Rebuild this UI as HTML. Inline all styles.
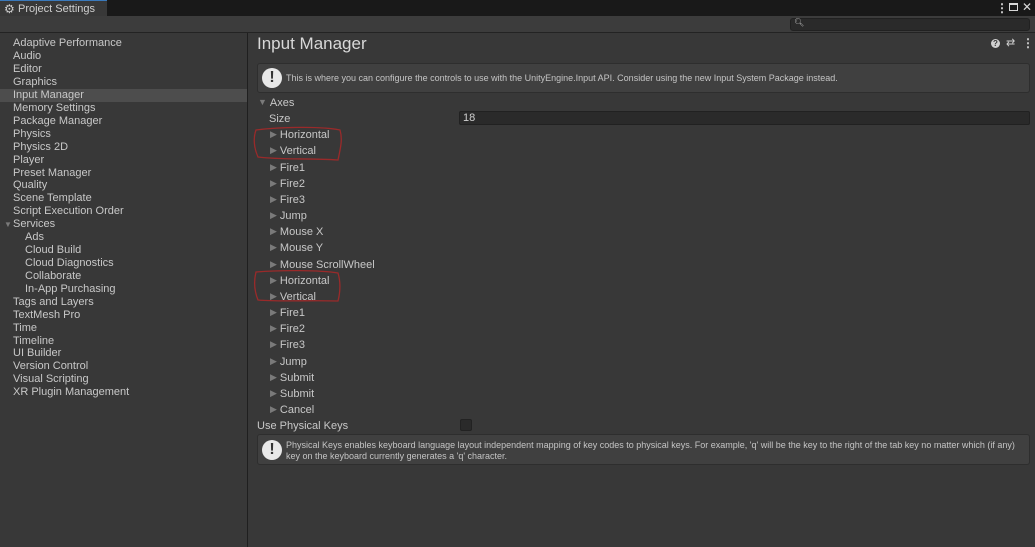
<!DOCTYPE html>
<html><head><meta charset="utf-8">
<style>
*{margin:0;padding:0;box-sizing:border-box}
body{width:1035px;height:547px;background:#383838;font-family:"Liberation Sans",sans-serif;color:#c8c8c8;font-size:11px;position:relative;overflow:hidden}
.abs{position:absolute;white-space:nowrap}
#top{left:0;top:0;width:1035px;height:16px;background:#191919}
#tab{left:0;top:0;width:107px;height:17px;background:#383838;border-top:1px solid #3a79bb}
#tb{left:0;top:16px;width:1035px;height:17px;background:#3c3c3c;border-bottom:1px solid #232323}
#search{left:790px;top:18px;width:240px;height:13px;background:#2a2a2a;border:1px solid #212121;border-radius:3px}
#sep{left:247px;top:33px;width:1px;height:514px;background:#1f1f1f}
.li{position:absolute;left:13px;height:13px;line-height:13px;font-size:11px;color:#c8c8c8}
#sel{left:0;top:88px;width:247px;height:13px;background:#4d4d4d}
.r{position:absolute;height:16px;line-height:16px;font-size:11px;color:#c8c8c8;white-space:nowrap}
.tri{color:#7a7a7a;font-size:9px;margin-right:3px;position:relative;top:-1px}
.help{position:absolute;left:257px;background:#404040;border:1px solid #2e2e2e;border-radius:3px}
.bang{position:absolute;left:4px;width:20px;height:20px;border-radius:50%;background:#e8e8e8;color:#333;font-weight:bold;font-size:16px;text-align:center;line-height:20px}
.ht{position:absolute;left:28px;font-size:9px;color:#c4c4c4;line-height:11px}
#L{position:absolute;left:0;top:1px;width:247px;height:400px}
#R{position:absolute;left:0;top:1px;width:1035px;height:420px}
</style></head><body>
<div id="top" class="abs"></div>
<div id="tab" class="abs"><span style="position:absolute;left:4px;top:1px;font-size:12px;color:#d0d0d0">⚙</span><span style="position:absolute;left:18px;top:2px;font-size:11px;color:#d0d0d0">Project Settings</span></div>
<div class="abs" style="left:996px;top:1px;color:#d8d8d8;font-size:12px;font-weight:bold">⋮</div>
<div class="abs" style="left:1009px;top:3px;width:9px;height:8px;border:1px solid #d8d8d8;border-top-width:2px"></div>
<div class="abs" style="left:1022px;top:0px;color:#d8d8d8;font-size:12px">✕</div>
<div id="tb" class="abs"></div>
<div id="search" class="abs"><span style="position:absolute;left:3px;top:-1px;font-size:8px;color:#bbb">🔍︎</span></div>
<div id="sep" class="abs"></div>
<div id="L">
<div id="sel" class="abs"></div>
<div class="li" style="top:36px">Adaptive Performance</div>
<div class="li" style="top:49px">Audio</div>
<div class="li" style="top:62px">Editor</div>
<div class="li" style="top:75px">Graphics</div>
<div class="li" style="top:88px">Input Manager</div>
<div class="li" style="top:101px">Memory Settings</div>
<div class="li" style="top:114px">Package Manager</div>
<div class="li" style="top:127px">Physics</div>
<div class="li" style="top:140px">Physics 2D</div>
<div class="li" style="top:153px">Player</div>
<div class="li" style="top:166px">Preset Manager</div>
<div class="li" style="top:178px">Quality</div>
<div class="li" style="top:191px">Scene Template</div>
<div class="li" style="top:204px">Script Execution Order</div>
<div class="li" style="top:217px;left:4px"><span style="font-size:8px;color:#7a7a7a;display:inline-block;width:9px">▼</span>Services</div>
<div class="li" style="top:230px;left:25px">Ads</div>
<div class="li" style="top:243px;left:25px">Cloud Build</div>
<div class="li" style="top:256px;left:25px">Cloud Diagnostics</div>
<div class="li" style="top:269px;left:25px">Collaborate</div>
<div class="li" style="top:282px;left:25px">In-App Purchasing</div>
<div class="li" style="top:295px">Tags and Layers</div>
<div class="li" style="top:308px">TextMesh Pro</div>
<div class="li" style="top:321px">Time</div>
<div class="li" style="top:334px">Timeline</div>
<div class="li" style="top:346px">UI Builder</div>
<div class="li" style="top:359px">Version Control</div>
<div class="li" style="top:372px">Visual Scripting</div>
<div class="li" style="top:385px">XR Plugin Management</div>
</div>

<div class="abs" style="left:257px;top:34px;font-size:17px;color:#d8d8d8">Input Manager</div>
<div class="abs" style="left:991px;top:39px;width:9px;height:9px;border-radius:50%;background:#d0d0d0;color:#383838;font-size:8px;font-weight:bold;text-align:center;line-height:9px">?</div>
<div class="abs" style="left:1006px;top:36px;font-size:11px;color:#d0d0d0">⇄</div>
<div class="abs" style="left:1022px;top:36px;font-size:12px;color:#d0d0d0;font-weight:bold">⋮</div>

<div class="help" style="top:63px;width:773px;height:30px"><div class="bang" style="top:4px">!</div><div class="ht" style="top:9px">This is where you can configure the controls to use with the UnityEngine.Input API. Consider using the new Input System Package instead.</div></div>

<div id="R">
<div class="r" style="left:258px;top:94px"><span class="tri">▼</span>Axes</div>
<div class="r" style="left:269px;top:110px">Size</div>
<div class="abs" style="left:459px;top:110px;width:571px;height:14px;background:#2a2a2a;border:1px solid #212121;border-radius:2px;padding-left:3px;line-height:12px;font-size:11px;color:#d0d0d0">18</div>
<div class="r" style="left:270px;top:126px"><span class="tri">▶</span>Horizontal</div>
<div class="r" style="left:270px;top:142px"><span class="tri">▶</span>Vertical</div>
<div class="r" style="left:270px;top:159px"><span class="tri">▶</span>Fire1</div>
<div class="r" style="left:270px;top:175px"><span class="tri">▶</span>Fire2</div>
<div class="r" style="left:270px;top:191px"><span class="tri">▶</span>Fire3</div>
<div class="r" style="left:270px;top:207px"><span class="tri">▶</span>Jump</div>
<div class="r" style="left:270px;top:223px"><span class="tri">▶</span>Mouse X</div>
<div class="r" style="left:270px;top:239px"><span class="tri">▶</span>Mouse Y</div>
<div class="r" style="left:270px;top:256px"><span class="tri">▶</span>Mouse ScrollWheel</div>
<div class="r" style="left:270px;top:272px"><span class="tri">▶</span>Horizontal</div>
<div class="r" style="left:270px;top:288px"><span class="tri">▶</span>Vertical</div>
<div class="r" style="left:270px;top:304px"><span class="tri">▶</span>Fire1</div>
<div class="r" style="left:270px;top:320px"><span class="tri">▶</span>Fire2</div>
<div class="r" style="left:270px;top:336px"><span class="tri">▶</span>Fire3</div>
<div class="r" style="left:270px;top:353px"><span class="tri">▶</span>Jump</div>
<div class="r" style="left:270px;top:369px"><span class="tri">▶</span>Submit</div>
<div class="r" style="left:270px;top:385px"><span class="tri">▶</span>Submit</div>
<div class="r" style="left:270px;top:401px"><span class="tri">▶</span>Cancel</div>
</div>
<div class="r" style="left:257px;top:418px">Use Physical Keys</div>
<div class="abs" style="left:460px;top:419px;width:12px;height:12px;background:#2a2a2a;border:1px solid #222;border-radius:2px"></div>

<div class="help" style="top:434px;width:773px;height:31px"><div class="bang" style="top:5px">!</div><div class="ht" style="top:5px">Physical Keys enables keyboard language layout independent mapping of key codes to physical keys. For example, 'q' will be the key to the right of the tab key no matter which (if any)<br>key on the keyboard currently generates a 'q' character.</div></div>

<svg class="abs" style="left:0;top:0" width="1035" height="547">
<path d="M256 130 C280 127,320 126,340 130 C343 140,340 150,338 160 C310 158,280 160,258 157 C254 148,253 138,256 130 Z" fill="none" stroke="#9a2a2a" stroke-width="1.3"/>
<path d="M256 272 C280 270,320 270,338 273 C341 283,340 293,338 301 C310 300,280 302,258 300 C254 290,254 280,256 272 Z" fill="none" stroke="#9a2a2a" stroke-width="1.3"/>
</svg>
</body></html>
